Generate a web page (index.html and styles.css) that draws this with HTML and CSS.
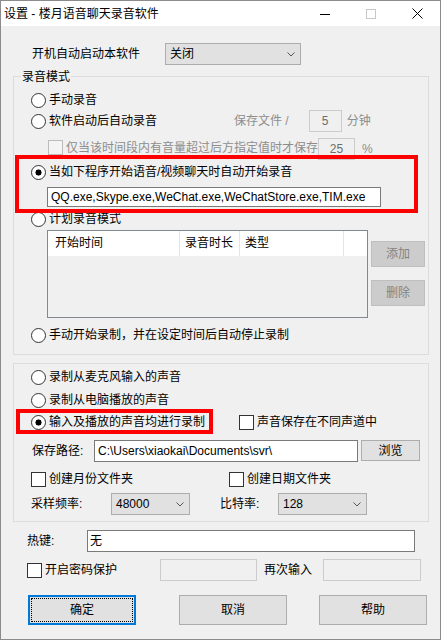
FILE: index.html
```html
<!DOCTYPE html>
<html lang="zh-CN">
<head>
    <meta charset="UTF-8">
    <meta name="viewport" content="width=device-width, initial-scale=1.0">
    <title>设置 - 楼月语音聊天录音软件</title>
    <link rel="stylesheet" href="styles.css">
</head>
<body>

<div class="window">

    <!-- Title bar -->
    <div class="titlebar">
        <span class="title">设置 - 楼月语音聊天录音软件</span>
        <div class="caption">
            <span class="cap-btn">
                <svg width="10" height="10" viewBox="0 0 10 10"><path d="M0 5.5H10" stroke="#000" stroke-width="1"/></svg>
            </span>
            <span class="cap-btn">
                <svg width="10" height="10" viewBox="0 0 10 10"><rect x="0.5" y="0.5" width="9" height="9" fill="none" stroke="#c8c8c8"/></svg>
            </span>
            <span class="cap-btn">
                <svg width="11" height="11" viewBox="0 0 11 11"><path d="M0.5 0.5L10.5 10.5M10.5 0.5L0.5 10.5" stroke="#000" stroke-width="1"/></svg>
            </span>
        </div>
    </div>

    <div class="dialog">

        <!-- Autostart -->
        <div class="row autostart">
            <span class="label">开机自动启动本软件</span>
            <div class="select autostart-select">
                <span>关闭</span>
                <svg width="8" height="5" viewBox="0 0 8 5"><path d="M0.5 0.5L4 4L7.5 0.5" fill="none" stroke="#555"/></svg>
            </div>
        </div>

        <!-- Recording mode -->
        <div class="group mode">
            <span class="group-title">录音模式</span>

            <div class="row r-manual">
                <span class="radio">手动录音</span>
            </div>

            <div class="row r-auto">
                <span class="radio">软件启动后自动录音</span>
                <span class="dim save-every">保存文件 /</span>
                <span class="field off minutes">5</span>
                <span class="dim unit">分钟</span>
            </div>

            <div class="row r-level">
                <span class="check off-check dim">仅当该时间段内有音量超过后方指定值时才保存</span>
                <span class="field off percent">25</span>
                <span class="dim pct">%</span>
            </div>

            <div class="flagged chat">
                <div class="row r-chat">
                    <span class="radio on">当如下程序开始语音/视频聊天时自动开始录音</span>
                </div>
                <div class="row r-apps">
                    <span class="field apps">QQ.exe,Skype.exe,WeChat.exe,WeChatStore.exe,TIM.exe</span>
                </div>
            </div>

            <div class="row r-plan">
                <span class="radio">计划录音模式</span>
            </div>

            <div class="plan">
                <div class="listview">
                    <div class="list-head">
                        <span class="col c1">开始时间</span>
                        <span class="col c2">录音时长</span>
                        <span class="col c3">类型</span>
                        <span class="col c4"></span>
                    </div>
                </div>
                <div class="plan-btns">
                    <button class="btn off">添加</button>
                    <button class="btn off">删除</button>
                </div>
            </div>

            <div class="row r-timed">
                <span class="radio">手动开始录制，并在设定时间后自动停止录制</span>
            </div>
        </div>

        <!-- Sources and output -->
        <div class="group source">
            <div class="row r-mic">
                <span class="radio">录制从麦克风输入的声音</span>
            </div>
            <div class="row r-speaker">
                <span class="radio">录制从电脑播放的声音</span>
            </div>
            <div class="row r-both">
                <span class="radio on flagged-inline">输入及播放的声音均进行录制</span>
                <span class="check split">声音保存在不同声道中</span>
            </div>

            <div class="row r-path">
                <span class="label path-label">保存路径:</span>
                <span class="field path">C:\Users\xiaokai\Documents\svr\</span>
                <button class="btn browse">浏览</button>
            </div>

            <div class="row r-folders">
                <span class="check month">创建月份文件夹</span>
                <span class="check">创建日期文件夹</span>
            </div>

            <div class="row r-format">
                <span class="label rate-label">采样频率:</span>
                <div class="select rate">
                    <span>48000</span>
                    <svg width="8" height="5" viewBox="0 0 8 5"><path d="M0.5 0.5L4 4L7.5 0.5" fill="none" stroke="#555"/></svg>
                </div>
                <span class="label bit-label">比特率:</span>
                <div class="select bitrate">
                    <span>128</span>
                    <svg width="8" height="5" viewBox="0 0 8 5"><path d="M0.5 0.5L4 4L7.5 0.5" fill="none" stroke="#555"/></svg>
                </div>
            </div>
        </div>

        <!-- Hotkey / password -->
        <div class="row r-hotkey">
            <span class="label hotkey-label">热键:</span>
            <span class="field hotkey">无</span>
        </div>

        <div class="row r-password">
            <span class="check pw">开启密码保护</span>
            <span class="field off pw-box"></span>
            <span class="label again">再次输入</span>
            <span class="field off pw-box2"></span>
        </div>

        <div class="row r-actions">
            <button class="btn action default">确定</button>
            <button class="btn action cancel">取消</button>
            <button class="btn action help">帮助</button>
        </div>

    </div>
</div>

</body>
</html>
```

FILE: styles.css
```css
* {
    box-sizing: border-box;
}

body {
    margin: 0;
    font-family: "Liberation Sans", "Noto Sans CJK SC", sans-serif;
    font-size: 12px;
    color: #000;
}

/* Window frame */
.window {
    width: 441px;
    height: 640px;
    border: 1px solid #8b8b8b;
    background-color: #f0f0f0;
    display: flex;
    flex-direction: column;
}

.titlebar {
    height: 25px;
    flex-shrink: 0;
    background-color: #fff;
    display: flex;
    align-items: center;
}

.title {
    padding-left: 3px;
    line-height: 16px;
}

.caption {
    margin-left: auto;
    display: flex;
    height: 100%;
}

.cap-btn {
    width: 46px;
    display: flex;
    align-items: center;
    justify-content: center;
}

.cap-btn svg {
    display: block;
}

/* Dialog body */
.dialog {
    display: flex;
    flex-direction: column;
}

.row {
    display: flex;
    align-items: center;
    height: 20px;
    line-height: 16px;
    white-space: nowrap;
}

.label {
    white-space: nowrap;
}

.dim {
    color: #8d8d8d;
}

/* Radio buttons and check boxes */
.radio,
.check {
    display: flex;
    align-items: center;
    gap: 3px;
}

.radio::before,
.check::before {
    content: "";
    width: 13px;
    height: 13px;
    flex-shrink: 0;
    border: 1px solid #333;
    background-color: #fff;
}

.radio::before {
    border-radius: 50%;
}

.radio.on::before {
    background: radial-gradient(circle, #000 0 2.8px, #fff 3.3px);
}

.check.off-check::before {
    border-color: #bcbcbc;
    background-color: #f4f4f4;
}

/* Text fields */
.field {
    display: flex;
    align-items: center;
    height: 22px;
    border: 1px solid #7a7a7a;
    background-color: #fff;
    padding: 0 3px;
}

.field.off {
    border-color: #cccccc;
    background-color: #f0f0f0;
    color: #6d6d6d;
    justify-content: center;
}

/* Combo boxes */
.select {
    display: flex;
    align-items: center;
    justify-content: space-between;
    height: 22px;
    border: 1px solid #adadad;
    background-color: #e1e1e1;
    padding: 0 5px 0 4px;
}

.select svg {
    display: block;
}

/* Push buttons */
.btn {
    font: inherit;
    color: #000;
    border: 1px solid #adadad;
    background-color: #e1e1e1;
    padding: 0;
    line-height: 16px;
}

.btn.off {
    color: #838383;
    background-color: #cccccc;
    border-color: #bfbfbf;
}

/* Autostart row */
.autostart {
    margin-top: 17px;
    height: 22px;
    padding-left: 31px;
}

.autostart .label {
    width: 133px;
}

.autostart-select {
    width: 136px;
}

/* Group boxes */
.group {
    position: relative;
    width: 416px;
    margin-left: 12px;
    border: 1px solid #dcdcdc;
}

.group-title {
    position: absolute;
    top: -8px;
    left: 7px;
    padding: 0 1px;
    line-height: 16px;
    background-color: #f0f0f0;
}

.mode {
    margin-top: 11px;
    padding: 13px 0 9px 17px;
}

.r-auto {
    height: 22px;
}

.save-every {
    margin-left: 77px;
}

.minutes {
    width: 33px;
    margin-left: 20px;
}

.unit {
    margin-left: 5px;
}

.r-level {
    margin-top: 6px;
    height: 22px;
    padding-left: 17px;
}

.r-level .check {
    margin-bottom: 3px;
}

.percent {
    width: 37px;
}

.pct {
    margin-left: 7px;
}

/* Red marker drawn over a highlighted option */
.flagged,
.flagged-inline {
    position: relative;
}

.flagged::after,
.flagged-inline::after {
    content: "";
    position: absolute;
    border: 4px solid #ff0000;
    pointer-events: none;
}

.flagged::after {
    top: -7px;
    bottom: -6px;
    left: -16px;
    right: 10px;
}

.chat {
    margin-top: 2px;
}

.r-apps {
    margin-top: 5px;
    padding-left: 16px;
}

.apps {
    width: 334px;
    height: 20px;
}

.r-plan {
    margin-top: 2px;
}

/* Schedule list */
.plan {
    display: flex;
    gap: 3px;
    margin-top: 1px;
    padding-left: 16px;
}

.listview {
    width: 321px;
    height: 88px;
    border: 1px solid #828790;
}

.list-head {
    display: flex;
    height: 25px;
    background-color: #fff;
    line-height: 25px;
}

.col {
    border-right: 1px solid #e5e5e5;
    padding-left: 6px;
}

.c1 {
    width: 132px;
    padding-left: 7px;
}

.c2 {
    width: 60px;
    padding-left: 5px;
}

.c3 {
    width: 104px;
    padding-left: 5px;
}

.c4 {
    flex: 1;
    border-right: none;
}

.plan-btns {
    display: flex;
    flex-direction: column;
    gap: 13px;
    padding-top: 11px;
}

.plan-btns .btn {
    width: 54px;
    height: 26px;
}

.r-timed {
    margin-top: 7px;
}

/* Source group */
.source {
    margin-top: 8px;
    padding: 3px 0 6px 17px;
}

.r-speaker {
    margin-top: 3px;
}

.r-both {
    margin-top: 2px;
}

.flagged-inline::after {
    top: -5px;
    bottom: -4px;
    left: -15px;
    right: -8px;
}

.split {
    margin-left: 34px;
}

.r-path {
    margin-top: 8px;
    height: 22px;
    padding-left: 1px;
}

.path-label {
    width: 62px;
}

.path {
    width: 264px;
}

.browse {
    width: 59px;
    height: 21px;
    margin-left: 3px;
    align-self: flex-start;
}

.r-folders {
    margin-top: 7px;
}

.month {
    width: 198px;
}

.r-format {
    margin-top: 4px;
    height: 22px;
}

.rate-label {
    width: 80px;
}

.rate {
    width: 79px;
}

.bit-label {
    width: 58px;
    margin-left: 30px;
}

.bitrate {
    width: 89px;
}

/* Hotkey and password */
.r-hotkey {
    margin-top: 8px;
    height: 22px;
    padding-left: 26px;
}

.hotkey-label {
    width: 60px;
}

.hotkey {
    width: 328px;
    padding-left: 2px;
}

.r-password {
    margin-top: 7px;
    height: 22px;
    padding-left: 26px;
}

.pw {
    width: 133px;
}

.pw-box {
    width: 97px;
}

.again {
    margin-left: 7px;
    width: 59px;
}

.pw-box2 {
    width: 98px;
}

/* Dialog buttons */
.r-actions {
    margin-top: 14px;
    height: 30px;
    padding-left: 27px;
}

.action {
    width: 108px;
    height: 30px;
}

.action.default {
    border: 2px solid #0078d7;
    outline: 1px dotted #000;
    outline-offset: -4px;
}

.cancel {
    margin-left: 43px;
}

.help {
    margin-left: 32px;
}
```
